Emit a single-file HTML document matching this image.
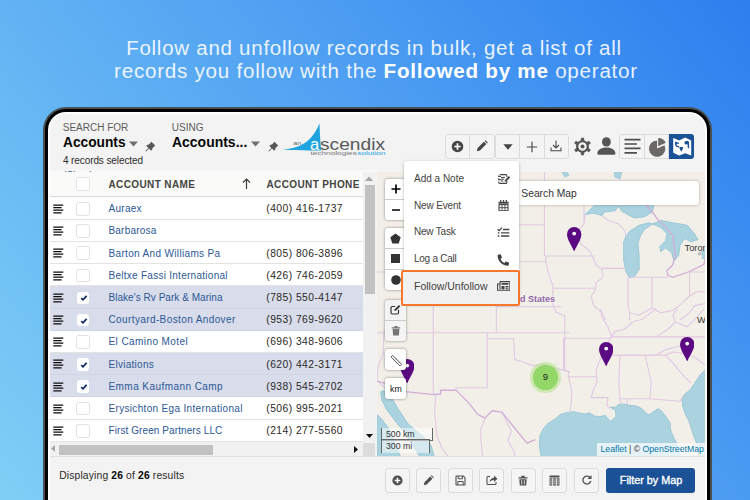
<!DOCTYPE html>
<html><head><meta charset="utf-8">
<style>
*{box-sizing:border-box;margin:0;padding:0}
html,body{width:750px;height:500px;overflow:hidden}
body{font-family:"Liberation Sans",sans-serif;position:relative;
background:linear-gradient(51deg,#7fcff6 0%,#2d7fef 100%);}
.abs{position:absolute}
.title{position:absolute;left:0;width:750px;text-align:center;color:rgba(255,255,255,.9);font-size:19.600px;white-space:nowrap;line-height:24px;letter-spacing:.7px;transform-origin:50% 50%}
.title b{color:#fff}
#t1{top:35.800px;left:-1.2px;transform:scaleX(1.047)}
#t2{top:59px;left:.7px;transform:scaleX(1.053)}
.frame{position:absolute;left:42.800px;top:106.600px;width:669.600px;height:420px;border-radius:23px;background:#4a5153}
.frame2{position:absolute;left:45.100px;top:108.900px;width:665px;height:420px;border-radius:20.700px;background:#000}
.screen{position:absolute;left:47.800px;top:111.800px;width:659.200px;height:400px;border-radius:18px 18px 0 0;overflow:hidden;background:#fff}
.inner{position:absolute;left:2.200px;top:2.200px;width:654.800px;height:400px;border-radius:15.800px 15.800px 0 0;overflow:hidden;background:#f3f3f3}
.pg{position:absolute;left:-50px;top:-114px;width:750px;height:500px}
.lbl{position:absolute;font-size:10px;letter-spacing:0;color:#5e5c5a;white-space:nowrap}
.big{position:absolute;font-size:15px;transform-origin:0 50%;transform:scaleX(.915);font-weight:bold;color:#080707;white-space:nowrap}
.sm{position:absolute;font-size:10px;letter-spacing:-.1px;color:#2e2c2a;white-space:nowrap}
.th{position:absolute;font-size:10px;font-weight:bold;letter-spacing:.38px;color:#454543;white-space:nowrap;top:178.800px;line-height:12px}
.row{position:absolute;left:48px;width:316px;height:22.2px;border-bottom:1px solid #e4e3e2;background:#fff}
.row.sel{background:#d8dceb;border-bottom-color:#d0d4e4}
.row .nm{position:absolute;left:60.5px;top:5.700px;letter-spacing:.3px;font-size:10px;line-height:12px;color:#2b5896;white-space:nowrap}
.row .ph{position:absolute;left:218.3px;top:5.700px;letter-spacing:.45px;font-size:10.300px;line-height:12px;color:#2b2826;white-space:nowrap}
.row .cb{position:absolute;left:28.400px;top:4.500px;width:13.500px;height:13.500px;border:1px solid #e3e1e0;border-radius:2.500px;background:#fff}
.row.sel .cb{border-color:#fff;left:29px;top:5.300px;width:12.300px;height:12.300px}
.row .li{position:absolute;left:5.300px;top:6.400px;width:11px;height:10px}
.tb{position:absolute;top:134px;height:25px;border:1px solid #dddbda;background:#f4f4f4}
.mctl{position:absolute;left:385.400px;width:21px;background:#fff;border-radius:3px;box-shadow:0 0 3px rgba(0,0,0,.45)}
.mi{position:absolute;left:414px;font-size:10.5px;color:#444341;white-space:nowrap;line-height:12px}
.bb{position:absolute;top:467.700px;width:25px;height:25px;border:1px solid #dddbda;border-radius:3px;background:#f5f5f5}
</style></head><body>
<div class="title" id="t1">Follow and unfollow records in bulk, get a list of all</div>
<div class="title" id="t2">records you follow with the <b>Followed by me</b> operator</div>
<div class="frame"></div><div class="frame2"></div>
<div class="screen"><div class="inner"><div class="pg" id="pg">

<div class="abs" style="left:48px;top:112px;width:659px;height:59px;background:#f3f3f3"></div>
<div class="abs" style="left:48px;top:169.300px;width:329px;height:2.700px;background:linear-gradient(#f3f3f3,#fbfbfa)"></div>
<div class="lbl" style="left:62.800px;top:122px">SEARCH FOR</div>
<div class="big" style="left:63px;top:133.2px">Accounts</div>
<svg class="abs" style="left:129.300px;top:141.500px" width="9" height="6" viewBox="0 0 9 6"><path d="M0 0.5h9L4.5 5.5z" fill="#706e6b"/></svg>
<svg class="abs pin" style="left:145.300px;top:140.800px" width="11" height="11" viewBox="0 0 11 11"><path d="M6.2 0.6l4.2 4.2-1.1.5-1.9 1.9-.3 2-1.2.3L4 7.6 1 10.6l-.6-.6 3-3L1.500 5.100l.3-1.200 2-.3L5.700 1.700z" fill="#5a5856"/></svg>
<div class="lbl" style="left:171.800px;top:122px">USING</div>
<div class="big" style="left:172px;top:133.2px;transform:scaleX(.931)">Accounts...</div>
<svg class="abs" style="left:250.800px;top:141.500px" width="9" height="6" viewBox="0 0 9 6"><path d="M0 0.5h9L4.5 5.5z" fill="#706e6b"/></svg>
<svg class="abs pin" style="left:267.800px;top:140.800px" width="11" height="11" viewBox="0 0 11 11"><path d="M6.2 0.6l4.2 4.2-1.1.5-1.9 1.9-.3 2-1.2.3L4 7.6 1 10.6l-.6-.6 3-3L1.500 5.100l.3-1.200 2-.3L5.700 1.700z" fill="#5a5856"/></svg>
<div class="sm" style="left:63px;top:155px">4 records selected</div>
<div class="sm" style="left:63px;top:169.600px;color:#2b5896">(Clear)</div>
<!-- logo -->
<svg class="abs" style="left:280px;top:120px" width="110" height="38" viewBox="0 0 110 38">
<path d="M2.400 29.600C10 29 18 27.200 24 23.500C31 19 36 12 39.500 3.200C39.800 12 40.300 22 41.200 30.400L30 30.400C20 30.400 10 30.200 2.400 29.600z" fill="#1ea4e0"/>
<text x="13.300" y="25.200" font-family="Liberation Sans" font-size="6" fill="#666" textLength="8" lengthAdjust="spacingAndGlyphs">an</text>
<text x="30" y="30.100" font-family="Liberation Sans" font-size="16" fill="#fff" textLength="9.200" lengthAdjust="spacingAndGlyphs">a</text>
<text x="40" y="30.100" font-family="Liberation Sans" font-size="16" fill="#58595b" textLength="65" lengthAdjust="spacingAndGlyphs">scendix</text>
<text x="30.400" y="35" font-family="Liberation Sans" font-size="5.200" fill="#77787b" textLength="46.500" lengthAdjust="spacingAndGlyphs">technologies</text>
<text x="77.300" y="35" font-family="Liberation Sans" font-size="5.200" fill="#1ea4e0" textLength="28.300" lengthAdjust="spacingAndGlyphs">solution</text>
</svg>
<!-- toolbar -->
<div class="tb" style="left:445px;width:25.500px;border-radius:3px 0 0 3px"></div>
<div class="tb" style="left:469.500px;width:25.500px;border-radius:0 3px 3px 0"></div>
<div class="tb" style="left:495.500px;width:25px;border-radius:3px 0 0 3px"></div>
<div class="tb" style="left:519.500px;width:25.500px;border-radius:0"></div>
<div class="tb" style="left:544px;width:25px;border-radius:0 3px 3px 0"></div>
<svg class="abs" style="left:451px;top:140px" width="13" height="13" viewBox="0 0 13 13"><circle cx="6.500" cy="6.500" r="5.800" fill="#444"/><path d="M6.500 3.300v6.400M3.300 6.500h6.400" stroke="#fff" stroke-width="1.700"/></svg>
<svg class="abs" style="left:476px;top:140.500px" width="12" height="12" viewBox="0 0 12 12"><path d="M0.800 11.200l.8-3.200 6.300-6.300 2.400 2.400-6.300 6.300zM8.600 1l.9-.7 2.300 2.300-.8.800z" fill="#444"/></svg>
<svg class="abs" style="left:503px;top:144px" width="10" height="6" viewBox="0 0 10 6"><path d="M0.300 0.300h9.400L5 5.700z" fill="#444"/></svg>
<svg class="abs" style="left:526px;top:141px" width="12" height="12" viewBox="0 0 12 12"><path d="M6 0.800v10.400M0.800 6h10.400" stroke="#4a4a4a" stroke-width="1.200"/></svg>
<svg class="abs" style="left:550.500px;top:140.500px" width="12" height="12" viewBox="0 0 12 12"><path d="M6 0.500v7M3 5l3 3 3-3" stroke="#4a4a4a" stroke-width="1.100" fill="none"/><path d="M1 7.500v3.300h10V7.500" stroke="#4a4a4a" stroke-width="1.100" fill="none"/></svg>
<!-- gear -->
<svg class="abs" style="left:573.5px;top:137.1px" width="19" height="19" viewBox="-9.5 -9.5 19 19"><circle r="5.9" fill="#575553"/><path d="M-1.25 -5.87 L-1.05 -8.33 L1.05 -8.33 L1.25 -5.87 L4.46 -4.01 L6.69 -5.08 L7.74 -3.26 L5.71 -1.85 L5.71 1.85 L7.74 3.26 L6.69 5.08 L4.46 4.01 L1.25 5.87 L1.05 8.33 L-1.05 8.33 L-1.25 5.87 L-4.46 4.01 L-6.69 5.08 L-7.74 3.26 L-5.71 1.85 L-5.71 -1.85 L-7.74 -3.26 L-6.69 -5.08 L-4.46 -4.01z" fill="#575553" stroke="#575553" stroke-width="1" stroke-linejoin="round"/><circle r="4.2" fill="#f3f3f3"/><circle r="2" fill="#575553"/></svg>
<!-- user -->
<svg class="abs" style="left:597px;top:137.5px" width="19" height="18.5" viewBox="0 0 19 18.5"><ellipse cx="9.4" cy="4.9" rx="4.4" ry="4.7" fill="#575553"/><path d="M0.400 16.200c0-3.200 3.600-5.700 9-5.700s9 2.500 9 5.700c0 1-.7 1.600-1.600 1.600H2c-.9 0-1.600-.6-1.600-1.600z" fill="#575553"/></svg>
<!-- view group -->
<div class="tb" style="left:619.500px;width:25.500px;border-radius:3px 0 0 3px"></div>
<div class="tb" style="left:644px;width:25.500px;border-radius:0"></div>
<div class="abs" style="left:669px;top:134px;width:25.500px;height:25.500px;background:#1b5297;border-radius:0 3px 3px 0"></div>
<svg class="abs" style="left:624px;top:138.500px" width="17" height="16" viewBox="0 0 17 16"><path d="M0.500 1.600h16M0.500 6h12.500M0.500 10.400h16M0.500 14.800h12.500" stroke="#514f4d" stroke-width="1.700"/></svg>
<svg class="abs" style="left:0;top:0" width="750" height="500" viewBox="0 0 750 500"><path d="M657.10 148.60 L664.53 145.13 A8.2 8.2 0 1 1 657.10 140.40z M658.20 146.30 L658.20 137.90 A8.4 8.4 0 0 1 665.81 142.75z" fill="#6b6966"/><path d="M673.2 137.900L679.200 140.400 685.200 137.600 691.200 140.400V155.600L685.200 153.200 679.200 155.600 673.200 152.800z" fill="#fff"/><path d="M675.200 141.600l3.600 1.200.4 1.400-2.200-.6-.4 1.600 2.400 1 .2 1.600-3.400-1.400-.9-2.400z" fill="#1b5297"/><path d="M684.600 141.600l2.600-.8 1.800 1 .2 6.600-1.500-.4-.1-3.800-2.200.4-1-1.400z" fill="#1b5297"/><path d="M679.200 147.400l2.200-.6 2 .8-1.900 4.200-1.300-1.900z" fill="#1b5297"/></svg>


<div class="abs" style="left:48px;top:172px;width:329px;height:284px;background:#fff"></div>
<div class="abs" style="left:48px;top:172px;width:316px;height:25.300px;background:#fafaf9;border-bottom:1px solid #dddbda"></div>
<div class="abs" style="left:76.400px;top:177.400px;width:13.500px;height:13.500px;border:1px solid #e3e1e0;border-radius:2.500px;background:#fff"></div>
<div class="th" style="left:108.500px">ACCOUNT NAME</div>
<svg class="abs" style="left:242px;top:178.500px" width="9" height="11" viewBox="0 0 9 11"><path d="M4.500 1v10M1 4.500l3.500-3.500 3.500 3.500" stroke="#3e3e3c" stroke-width="1.200" fill="none"/></svg>
<div class="th" style="left:266.500px">ACCOUNT PHONE</div>
<div class="row" style="top:197.6px"><svg class="li" viewBox="0 0 11 10"><path d="M0.300 1h10M0.300 3.600h8.300M0.300 6.200h10M0.300 8.800h8.300" stroke="#0c0d0e" stroke-width="1.250"/></svg><div class="cb"></div><div class="nm" style="letter-spacing:0.28px">Auraex</div><div class="ph">(400) 416-1737</div></div>
<div class="row" style="top:219.8px"><svg class="li" viewBox="0 0 11 10"><path d="M0.300 1h10M0.300 3.600h8.300M0.300 6.200h10M0.300 8.800h8.300" stroke="#0c0d0e" stroke-width="1.250"/></svg><div class="cb"></div><div class="nm" style="letter-spacing:0.20px">Barbarosa</div><div class="ph"></div></div>
<div class="row" style="top:242.0px"><svg class="li" viewBox="0 0 11 10"><path d="M0.300 1h10M0.300 3.600h8.300M0.300 6.200h10M0.300 8.800h8.300" stroke="#0c0d0e" stroke-width="1.250"/></svg><div class="cb"></div><div class="nm" style="letter-spacing:0.34px">Barton And Williams Pa</div><div class="ph">(805) 806-3896</div></div>
<div class="row" style="top:264.2px"><svg class="li" viewBox="0 0 11 10"><path d="M0.300 1h10M0.300 3.600h8.300M0.300 6.200h10M0.300 8.800h8.300" stroke="#0c0d0e" stroke-width="1.250"/></svg><div class="cb"></div><div class="nm" style="letter-spacing:0.27px">Beltxe Fassi International</div><div class="ph">(426) 746-2059</div></div>
<div class="row sel" style="top:286.4px"><svg class="li" viewBox="0 0 11 10"><path d="M0.300 1h10M0.300 3.600h8.300M0.300 6.200h10M0.300 8.800h8.300" stroke="#0c0d0e" stroke-width="1.250"/></svg><div class="cb"><svg style="position:absolute;left:1.600px;top:1.800px" width="8" height="8" viewBox="0 0 8 8"><path d="M1.200 4.200l1.800 1.700L6.600 1.900" stroke="#0f2a63" stroke-width="1.700" fill="none"/></svg></div><div class="nm" style="letter-spacing:0.04px">Blake's Rv Park &amp; Marina</div><div class="ph">(785) 550-4147</div></div>
<div class="row sel" style="top:308.6px"><svg class="li" viewBox="0 0 11 10"><path d="M0.300 1h10M0.300 3.600h8.300M0.300 6.200h10M0.300 8.800h8.300" stroke="#0c0d0e" stroke-width="1.250"/></svg><div class="cb"><svg style="position:absolute;left:1.600px;top:1.800px" width="8" height="8" viewBox="0 0 8 8"><path d="M1.200 4.200l1.800 1.700L6.600 1.900" stroke="#0f2a63" stroke-width="1.700" fill="none"/></svg></div><div class="nm" style="letter-spacing:0.39px">Courtyard-Boston Andover</div><div class="ph">(953) 769-9620</div></div>
<div class="row" style="top:330.8px"><svg class="li" viewBox="0 0 11 10"><path d="M0.300 1h10M0.300 3.600h8.300M0.300 6.200h10M0.300 8.800h8.300" stroke="#0c0d0e" stroke-width="1.250"/></svg><div class="cb"></div><div class="nm" style="letter-spacing:0.42px">El Camino Motel</div><div class="ph">(696) 348-9606</div></div>
<div class="row sel" style="top:353.0px"><svg class="li" viewBox="0 0 11 10"><path d="M0.300 1h10M0.300 3.600h8.300M0.300 6.200h10M0.300 8.800h8.300" stroke="#0c0d0e" stroke-width="1.250"/></svg><div class="cb"><svg style="position:absolute;left:1.600px;top:1.800px" width="8" height="8" viewBox="0 0 8 8"><path d="M1.200 4.200l1.800 1.700L6.600 1.900" stroke="#0f2a63" stroke-width="1.700" fill="none"/></svg></div><div class="nm" style="letter-spacing:0.28px">Elviations</div><div class="ph">(620) 442-3171</div></div>
<div class="row sel" style="top:375.2px"><svg class="li" viewBox="0 0 11 10"><path d="M0.300 1h10M0.300 3.600h8.300M0.300 6.200h10M0.300 8.800h8.300" stroke="#0c0d0e" stroke-width="1.250"/></svg><div class="cb"><svg style="position:absolute;left:1.600px;top:1.800px" width="8" height="8" viewBox="0 0 8 8"><path d="M1.200 4.200l1.800 1.700L6.600 1.900" stroke="#0f2a63" stroke-width="1.700" fill="none"/></svg></div><div class="nm" style="letter-spacing:0.44px">Emma Kaufmann Camp</div><div class="ph">(938) 545-2702</div></div>
<div class="row" style="top:397.4px"><svg class="li" viewBox="0 0 11 10"><path d="M0.300 1h10M0.300 3.600h8.300M0.300 6.200h10M0.300 8.800h8.300" stroke="#0c0d0e" stroke-width="1.250"/></svg><div class="cb"></div><div class="nm" style="letter-spacing:0.33px">Erysichton Ega International</div><div class="ph">(506) 995-2021</div></div>
<div class="row" style="top:419.6px"><svg class="li" viewBox="0 0 11 10"><path d="M0.300 1h10M0.300 3.600h8.300M0.300 6.200h10M0.300 8.800h8.300" stroke="#0c0d0e" stroke-width="1.250"/></svg><div class="cb"></div><div class="nm" style="letter-spacing:0.09px">First Green Partners LLC</div><div class="ph">(214) 277-5560</div></div>

<div class="abs" style="left:363.500px;top:172px;width:12px;height:270px;background:#f1f1f1"></div>
<div class="abs" style="left:364.600px;top:185.500px;width:10px;height:108.500px;background:#c1c1c1"></div>
<svg class="abs" style="left:365.500px;top:176px" width="8" height="5" viewBox="0 0 8 5"><path d="M0 5L4 0.500 8 5z" fill="#a3a3a3"/></svg>
<svg class="abs" style="left:366.200px;top:433.600px" width="7" height="4" viewBox="0 0 7 4"><path d="M0 0L3.500 4 7 0z" fill="#111"/></svg>
<div class="abs" style="left:48px;top:441.600px;width:327.500px;height:14.300px;background:#f1f1f1"></div>
<div class="abs" style="left:59.500px;top:444.600px;width:154px;height:10px;background:#c1c1c1"></div>
<svg class="abs" style="left:51.500px;top:445.500px" width="4" height="7" viewBox="0 0 4 7"><path d="M4 0L0 3.500 4 7z" fill="#a3a3a3"/></svg>
<svg class="abs" style="left:354.300px;top:446px" width="4" height="7" viewBox="0 0 4 7"><path d="M0 0L4 3.500 0 7z" fill="#111"/></svg><div class="abs" style="left:363.500px;top:443.400px;width:12px;height:12.500px;background:#dcdcdc"></div>
<div class="abs" style="left:375.500px;top:171px;width:1.700px;height:285px;background:#f3f3f3"></div>

<svg class="abs" style="left:377px;top:171px" width="330" height="285" viewBox="377 171 330 285">
<rect x="377" y="171" width="330" height="285" fill="#f2efe9"/>
<path d="M585.2 214.4 L592.4 207.2 L598.4 200.0 L656.0 200.0 L653.6 206.0 L652.4 212.0 L644.0 216.8 L634.4 218.0 L627.2 214.4 L621.2 210.8 L618.8 206.0 L615.2 210.8 L604.4 212.0 L602.0 215.6 L593.6 213.2z M623.6 242.0 L626.0 236.0 L629.6 231.2 L639.2 225.2 L648.8 222.8 L652.4 224.0 L644.0 230.0 L640.4 236.0 L638.0 243.2 L639.2 255.2 L639.2 269.6 L634.4 276.8 L629.6 278.0 L626.0 272.0 L623.6 260.0z M652.4 224.0 L660.8 220.4 L672.8 222.8 L687.2 225.2 L694.4 233.6 L698.0 239.6 L690.8 242.0 L684.8 238.4 L680.0 245.6 L678.8 255.2 L674.0 261.2 L671.6 252.8 L665.6 248.0 L660.8 251.6 L659.6 246.8 L665.6 240.8 L666.8 233.6 L660.8 227.6z M701.6 251.6 L707.6 248.7 L707.6 257.6 L702.8 258.8z M562 172l4-1 3 4-4 2zM614 171h8l-2 8-5-2z M541.3 458.0 L539.3 446.0 L540.0 435.3 L543.3 428.7 L548.0 423.3 L554.7 419.3 L560.0 414.7 L565.3 412.9 L573.3 411.6 L578.7 412.9 L585.3 414.0 L589.3 412.7 L594.7 416.0 L600.0 416.7 L605.3 415.3 L608.0 419.0 L610.7 421.3 L616.0 416.7 L615.3 410.0 L610.0 407.3 L615.3 407.3 L618.0 404.7 L623.3 404.0 L630.0 405.3 L636.7 406.0 L642.0 408.7 L646.0 413.3 L649.3 414.7 L654.0 411.3 L658.0 408.7 L661.3 410.7 L666.0 416.7 L670.0 422.7 L670.7 430.0 L673.3 436.7 L676.7 443.3 L679.3 448.7 L680.7 458.0z M709.0 366.0 L700.0 375.0 L690.0 390.0 L684.7 394.0 L682.0 399.3 L682.7 406.0 L684.7 412.7 L688.7 420.7 L691.3 428.7 L694.0 436.7 L696.7 443.3 L698.7 458.0 L709.0 458.0z M380.6 391.6 L386.6 390.4 L391.4 397.6 L398.6 409.6 L408.2 424.0 L422.6 436.0 L431.0 445.6 L434.6 457.6 L420.2 457.6 L413.0 445.6 L403.4 431.2 L393.8 419.2 L386.6 409.6 L381.8 400.0z M377.0 414.4 L381.8 419.2 L389.0 428.8 L393.8 440.8 L401.0 457.6 L377.0 457.6z" fill="#aad3df" stroke="#93c3d3" stroke-width=".8"/>
<path d="M585.2 214.4 L584.0 224.0 L578.0 231.2 L580.4 243.2 L590.0 251.6 L592.4 256.4 L596.0 264.8 L602.0 269.6 L603.2 276.8 L596.0 282.8 L594.8 291.2 L591.2 296.0 L593.6 305.6 L602.0 312.8 L605.6 320.0 M602.0 268.4 L624.8 268.4 M627.9 278.0 L627.9 305.6 L629.6 312.8 L629.6 320.0 M651.9 277.3 L651.9 308.0 M627.9 277.3 L668.0 277.3 M689.6 272.0 L689.6 296.0 L682.4 303.2 L672.8 310.4 L660.8 312.8 L651.9 308.0 L639.2 315.2 L629.6 312.8 M689.6 272.0 L707.6 272.0 M602.0 215.6 L608.0 220.4 L618.8 224.0 L624.8 231.2 L626.0 236.0 M584.0 224.0 L584.0 197.6 M689.6 296.0 L698.0 291.2 L707.6 292.4 M707.6 303.2 L694.4 305.6 L689.6 312.8 L680.0 320.0 M563.6 338.3 L610.4 338.3 L611.6 336.9 L708.8 336.9 M610.4 355.1 L665.6 355.1 M600.8 308.8 L602.0 317.2 L608.0 326.8 L611.6 336.9 L608.0 343.6 L600.8 358.0 L596.0 370.0 L597.2 382.0 L593.6 389.2 L591.2 397.6 L608.0 397.6 L606.8 404.8 L609.2 408.4 M620.0 355.6 L618.8 382.0 L620.0 398.8 L621.2 404.8 M645.2 355.6 L651.2 382.0 L650.0 398.8 L680.0 401.2 L682.4 396.4 M620.0 398.8 L627.2 398.8 L627.2 404.1 M627.2 398.8 L650.0 398.8 M656.0 355.1 L665.6 349.6 L680.0 346.0 L694.4 346.0 M665.6 355.1 L672.8 362.8 L684.8 377.2 L690.8 383.2 M665.6 355.1 L672.8 352.0 L682.4 353.2 L694.4 356.8 L705.2 365.2 M568.4 376.7 L596.0 376.7 M563.6 338.3 L563.6 370.0 L568.4 371.2 L568.4 376.7 L572.0 391.6 L570.8 406.0 L569.6 412.7 M611.6 336.9 L615.2 331.6 L624.8 329.2 L632.0 322.0 L641.6 319.6 L651.2 312.4 L656.0 308.8 M656.0 336.9 L668.0 329.2 L675.2 322.0 L672.8 314.8 L677.6 308.8 M675.2 322.0 L687.2 326.8 L696.8 317.2 L704.0 308.8 M376.8 332.7 L570.0 332.7 M433.2 171.2 L433.2 394.4 M496.3 224.0 L496.3 332.7 M487.2 332.7 L487.2 387.7 L456.0 387.7 L456.0 390.1 L440.4 390.1 L440.4 394.4 L433.2 394.4 M487.2 338.7 L513.6 338.7 L514.8 359.6 L523.2 362.0 L532.8 365.6 L544.8 364.4 L554.4 368.0 L564.0 370.4 L570.0 371.6 M564.7 332.7 L564.7 370.9 M553.0 305.0 L556.0 312.0 L564.7 316.0 L564.7 332.7 M376.8 272.0 L496.3 272.0 M496.3 261.7 L545.8 261.7 L545.8 256.0 L595.0 256.0 M544.4 171.0 L544.4 256.0 M496.0 224.7 L544.4 224.7 M545.8 261.7 L549.0 275.0 L552.8 285.5 L553.0 305.0 M552.8 288.3 L594.8 288.3 M496.3 306.8 L561.6 306.8 M435.8 395.2 L434.6 412.0 L437.0 436.0 L441.8 448.0 L449.0 457.6 M485.0 418.0 L480.2 431.2 L482.6 457.6 M501.8 412.0 L511.4 431.2 L507.8 440.8 L513.8 450.4 L515.0 457.6 M377.0 380.8 L386.6 389.2 M384.2 330.4 L383.0 354.4 L378.2 366.4 L377.0 380.8" fill="none" stroke="#e0c9e2" stroke-width="1.1"/>
<path d="M641.6 200.0 L652.4 212.0 L658.4 220.4 L665.6 226.4 L672.8 236.0 L675.2 255.2 L672.8 264.8 L666.8 270.8 L668.0 275.6 L672.8 277.3 L689.6 271.5 L704.0 264.3 L705.2 257.6 L707.6 255.2 M377.0 380.8 L384.2 383.2 L405.8 391.6 L433.4 394.7 L440.6 394.0 L440.6 390.4 L456.2 390.4 L468.2 402.4 L477.8 414.4 L485.0 418.0 L492.2 410.8 L501.8 412.0 L511.4 424.0 L521.0 436.0 L527.0 443.2 L535.4 439.6" fill="none" stroke="#d2add7" stroke-width="1.300"/>
<text x="520" y="301.600" font-family="Liberation Sans" font-size="9" font-weight="bold" fill="#8e66a3" stroke="#f7f4f0" stroke-width="1.5" paint-order="stroke">d States</text>
<text x="684.500" y="250.500" font-family="Liberation Sans" font-size="9.300" fill="#333">Toronto</text>
<circle cx="699.500" cy="253.800" r="1.200" fill="none" stroke="#777" stroke-width=".6"/>
<text x="697" y="322.500" font-family="Liberation Sans" font-size="9.300" fill="#333">Washington</text>
</svg>
<svg class="abs" style="left:567.2px;top:227.0px" width="14.400" height="24" viewBox="0 0 14.400 24"><path d="M6.500 23.200C5.600 20 0 12.700 0 7.200A7.200 7.200 0 0 1 14.400 7.200C14.400 12.700 8.800 20 7.900 23.200Q7.200 24.800 6.500 23.200z" fill="#5c0a82"/><circle cx="7.200" cy="6.600" r="1.900" fill="#fff"/></svg>
<svg class="abs" style="left:599.1px;top:342.3px" width="14.400" height="24" viewBox="0 0 14.400 24"><path d="M6.500 23.200C5.600 20 0 12.700 0 7.200A7.200 7.200 0 0 1 14.400 7.200C14.400 12.700 8.800 20 7.900 23.200Q7.200 24.800 6.500 23.200z" fill="#5c0a82"/><circle cx="7.200" cy="6.600" r="1.900" fill="#fff"/></svg>
<svg class="abs" style="left:679.8px;top:337.5px" width="14.400" height="24" viewBox="0 0 14.400 24"><path d="M6.500 23.200C5.600 20 0 12.700 0 7.200A7.200 7.200 0 0 1 14.400 7.200C14.400 12.700 8.800 20 7.900 23.200Q7.200 24.800 6.500 23.200z" fill="#5c0a82"/><circle cx="7.200" cy="6.600" r="1.900" fill="#fff"/></svg>
<svg class="abs" style="left:400.1px;top:359.0px" width="14.400" height="24" viewBox="0 0 14.400 24"><path d="M6.500 23.200C5.600 20 0 12.700 0 7.200A7.200 7.200 0 0 1 14.400 7.200C14.400 12.700 8.800 20 7.900 23.200Q7.200 24.800 6.500 23.200z" fill="#5c0a82"/><circle cx="7.200" cy="6.600" r="1.900" fill="#fff"/></svg>
<div class="abs" style="left:529.800px;top:362px;width:31px;height:31px;border-radius:50%;background:rgba(181,226,140,.6)"></div>
<div class="abs" style="left:533px;top:365.200px;width:24.600px;height:24.600px;border-radius:50%;background:rgba(110,204,57,.6);font-size:9.500px;line-height:24.600px;text-align:center;color:#222">9</div>
<div class="abs" style="left:377px;top:170px;width:331px;height:2px;background:#f3f3f3"></div>
<!-- search -->
<div class="abs" style="left:515px;top:181px;width:184px;height:24px;background:#fff;border-radius:3px;box-shadow:0 0 3px rgba(0,0,0,.3)"></div>
<div class="abs" style="left:521.300px;top:187.600px;font-size:10.300px;line-height:12px;color:#333">Search Map</div>
<!-- controls -->
<div class="mctl" style="top:179px;height:41.500px"><div style="position:absolute;left:0;top:20.500px;width:21px;height:1px;background:#ccc"></div>
<svg style="position:absolute;left:5.500px;top:5px" width="10" height="10" viewBox="0 0 10 10"><path d="M5 0.500v9M0.500 5h9" stroke="#000" stroke-width="1.700"/></svg>
<svg style="position:absolute;left:5.500px;top:26px" width="10" height="10" viewBox="0 0 10 10"><path d="M1 5h8" stroke="#000" stroke-width="1.700"/></svg></div>
<div class="mctl" style="top:228px;height:62.500px"><div style="position:absolute;left:0;top:20.500px;width:21px;height:1px;background:#ccc"></div><div style="position:absolute;left:0;top:41.500px;width:21px;height:1px;background:#ccc"></div>
<svg style="position:absolute;left:5px;top:5px" width="11" height="11" viewBox="0 0 11 11"><path d="M5.500 0.500L10.700 4.300 8.700 10.500H2.300L0.300 4.300z" fill="#333"/></svg>
<svg style="position:absolute;left:6px;top:26.500px" width="9" height="9" viewBox="0 0 9 9"><rect width="9" height="9" fill="#333"/></svg>
<svg style="position:absolute;left:5.500px;top:47px" width="10" height="10" viewBox="0 0 10 10"><circle cx="5" cy="5" r="4.800" fill="#333"/></svg></div>
<div class="mctl" style="top:300px;height:41px;background:#f4f4f4"><div style="position:absolute;left:0;top:20.500px;width:21px;height:1px;background:#ccc"></div>
<svg style="position:absolute;left:5px;top:4.500px" width="11" height="11" viewBox="0 0 11 11"><path d="M8.500 5.800v3a1.200 1.200 0 0 1-1.200 1.200H2.200A1.200 1.200 0 0 1 1 8.800V3.700a1.200 1.200 0 0 1 1.200-1.200h3" stroke="#333" stroke-width="1.200" fill="none"/><path d="M4.300 7l.4-1.800L9 0.900l1.400 1.400-4.300 4.300z" fill="#333"/></svg>
<svg style="position:absolute;left:5.500px;top:25px" width="10" height="11" viewBox="0 0 10 11"><path d="M0.800 2.300h8.400v1.200H0.800zM3.500 1h3v1.300h-3zM1.600 4h6.800l-.5 6.500H2.100z" fill="#777"/></svg></div>
<div class="mctl" style="top:349.500px;height:20.500px"><svg style="position:absolute;left:4.500px;top:4.500px" width="13" height="13" viewBox="0 0 13 13"><path d="M2.700 1.400L11.600 10.300 10 11.900 1.100 3z" fill="#fff" stroke="#444" stroke-width=".9"/><path d="M3.800 4.200l.9-.9M5.300 5.700l.9-.9M6.800 7.200l.9-.9M8.300 8.700l.9-.9" stroke="#666" stroke-width=".5"/></svg></div>
<div class="mctl" style="top:378.500px;height:20.500px;font-size:8.800px;line-height:22.500px;text-align:center;color:#111">km</div>
<!-- scale -->
<div class="abs" style="left:381.500px;top:428.400px;width:52px;height:12.600px;border:1.600px solid #666;border-top:none;background:rgba(255,255,255,.5);font-size:8.700px;line-height:12px;padding-left:3.500px;color:#333;white-space:nowrap">500 km</div>
<div class="abs" style="left:381.500px;top:439.400px;width:49px;height:13.200px;border:1.600px solid #666;border-bottom:none;background:rgba(255,255,255,.5);font-size:8.700px;line-height:12.500px;padding-left:3.500px;color:#333;white-space:nowrap">300 mi</div>
<!-- attribution -->
<div class="abs" style="left:597px;top:443.500px;width:110px;height:12.500px;background:rgba(255,255,255,.7);font-size:8.700px;line-height:12.500px;padding-left:3.500px;color:#333;white-space:nowrap"><span style="color:#0078a8">Leaflet</span> | &copy; <span style="color:#0078a8">OpenStreetMap</span></div>
<!-- dropdown -->
<div class="abs" style="left:404.500px;top:161.500px;width:115px;height:143px;background:#fff;border-radius:3px;box-shadow:0 1px 3px rgba(0,0,0,.3)"></div>
<div class="abs" style="left:401.500px;top:270.300px;width:118.300px;height:36px;border:2.300px solid #f6772e;border-radius:2px;background:#f1f1f1"></div>
<div class="mi" style="top:172.700px;font-size:10px">Add a Note</div>
<div class="mi" style="top:199.700px;font-size:10px;letter-spacing:-.15px">New Event</div>
<div class="mi" style="top:226.100px;font-size:10px;letter-spacing:-.2px">New Task</div>
<div class="mi" style="top:253.400px;font-size:10px;letter-spacing:-.26px">Log a Call</div>
<div class="mi" style="top:280px">Follow/Unfollow</div>
<!-- menu icons -->
<svg class="abs" style="left:498px;top:174.100px" width="12.500" height="10" viewBox="0 0 12.500 10"><path d="M1.800 0.600h6a1 1 0 0 1 1 1v1.500M8.800 7v1.400a1 1 0 0 1-1 1h-6a1 1 0 0 1-1-1v-0.800M0.800 5.800v-1.600M0.800 2.400v-.8" stroke="#444" stroke-width="1.100" fill="none"/><path d="M0 2.400h3M0 5.800h3M3 3.400h4M3 5.200h3.200M3 7h2.200" stroke="#444" stroke-width="1"/><path d="M6.500 7.800l.5-1.900 3.800-3.800 1.400 1.400-3.800 3.800z" fill="#444"/></svg>
<svg class="abs" style="left:498.500px;top:200px" width="11" height="11.500" viewBox="0 0 11 11.500"><path d="M0.500 1.800h10v2H0.500z" fill="#444"/><path d="M2.700 0v2M5.500 0v2M8.300 0v2" stroke="#444" stroke-width="1.200"/><rect x="1" y="4.600" width="9" height="6.200" fill="none" stroke="#444" stroke-width="1.100"/><path d="M1 7.700h9M4 4.600v6.200M7 4.600v6.200" stroke="#444" stroke-width=".9"/></svg>
<svg class="abs" style="left:497.500px;top:227.500px" width="12.500" height="10" viewBox="0 0 12.500 10"><path d="M0.500 2.200l1.600 1.500L5 0.600" stroke="#444" stroke-width="1.200" fill="none"/><path d="M6 2.500h6.300M4 5.800h8.300M4 9h8.300M0.800 5.800h1.600M0.800 9h1.600" stroke="#444" stroke-width="1.300"/></svg>
<svg class="abs" style="left:497.500px;top:254.100px" width="12.500" height="12" viewBox="0 0 12.500 12"><path d="M1.200 0.800l1.900-.5c.4 0 .6.100.8.500l1 2.300c.1.400 0 .7-.3.900l-1.100.9c.8 1.800 2.200 3.200 4 4l.9-1.100c.2-.3.500-.4.900-.3l2.300 1c.4.200.5.400.5.800l-.5 1.900c-.1.400-.4.500-.8.500C5.100 11.700.8 7.400.5 1.600c0-.4.300-.7.700-.8z" fill="#444"/></svg>
<svg class="abs" style="left:497px;top:280.800px" width="13.500" height="10.500" viewBox="0 0 13.500 10.500"><path d="M3 0.600h9.900v9.300H1.800a1.200 1.200 0 0 1-1.200-1.200V3h2.400" fill="none" stroke="#444" stroke-width="1.100"/><path d="M3 0.600v8.200" stroke="#444" stroke-width="1.100"/><path d="M4.500 2h7v1.800h-7zM4.500 5h3v3.500h-3zM8.500 5h3v1.400h-3zM8.500 7.200h3v1.300h-3z" fill="#444"/></svg>


<div class="abs" style="left:48px;top:455.800px;width:659px;height:50px;background:#f3f3f3;border-top:1.200px solid #e0dfde"></div>
<div class="abs" style="left:59.200px;top:470.400px;font-size:10.300px;letter-spacing:.16px;line-height:12px;color:#2b2826;white-space:nowrap">Displaying <b style="color:#080707">26</b> of <b style="color:#080707">26</b> results</div>
<div class="bb" style="left:385px"></div><div class="bb" style="left:416.500px"></div><div class="bb" style="left:448px"></div><div class="bb" style="left:479.500px"></div><div class="bb" style="left:511px"></div><div class="bb" style="left:542.500px"></div><div class="bb" style="left:574px"></div>
<div class="abs" style="left:606.500px;top:468px;width:89px;height:25px;background:#1b5297;border-radius:3px;color:#fff;font-size:10.800px;line-height:25px;text-align:center;white-space:nowrap;-webkit-text-stroke:.35px #fff">Filter by Map</div>
<svg class="abs" style="left:392px;top:475px" width="11" height="11" viewBox="0 0 13 13"><circle cx="6.500" cy="6.500" r="6" fill="#505050"/><path d="M6.500 3.200v6.600M3.200 6.500h6.600" stroke="#fff" stroke-width="1.800"/></svg>
<svg class="abs" style="left:423.500px;top:475px" width="11" height="11" viewBox="0 0 12 12"><path d="M0.800 11.200l.8-3.200 6.300-6.300 2.400 2.400-6.300 6.300zM8.600 1l.9-.7 2.300 2.300-.8.800z" fill="#505050"/></svg>
<svg class="abs" style="left:455px;top:475px" width="11" height="11" viewBox="0 0 11 11"><path d="M1 1.500a.5.500 0 0 1 .5-.5h6.800L10 2.700v6.800a.5.500 0 0 1-.5.500h-8a.5.500 0 0 1-.5-.5z" fill="none" stroke="#505050" stroke-width="1.100"/><path d="M3.200 1v2.800h4.200V1M2.800 10V6.500h5.400V10" fill="none" stroke="#505050" stroke-width="1"/></svg>
<svg class="abs" style="left:486px;top:474.500px" width="12" height="12" viewBox="0 0 12 12"><path d="M4 2.500H1.800a.8.800 0 0 0-.8.800v6.400a.8.800 0 0 0 .8.800h7.400a.8.800 0 0 0 .8-.8V8" fill="none" stroke="#505050" stroke-width="1.100"/><path d="M3.500 8.500c.3-3 2-4.500 4.500-4.700V1.500l3.500 3.300L8 8V6c-2 0-3.300.7-4.500 2.500z" fill="#505050"/></svg>
<svg class="abs" style="left:518.500px;top:475px" width="10" height="11" viewBox="0 0 10 11"><path d="M0.500 2.200h9v1.300H0.500zM3.300 0.800h3.400v1.400H3.300zM1.300 4.200h7.400l-.5 6.300H1.800z" fill="#505050"/><path d="M3.700 5.200v4.300M6.300 5.200v4.300" stroke="#f5f5f5" stroke-width=".8"/></svg>
<svg class="abs" style="left:549.500px;top:475px" width="11" height="11" viewBox="0 0 11 11"><path d="M0.500 0.500h10v2H0.500z" fill="#505050"/><path d="M0.500 3.200h2.800v7.300H0.500zM4.100 3.200h2.800v7.300H4.100zM7.700 3.200h2.800v7.300H7.700z" fill="#505050"/><path d="M0.500 5h10M0.500 6.900h10M0.500 8.800h10" stroke="#f7f7f7" stroke-width=".7"/></svg>
<svg class="abs" style="left:581px;top:474.500px" width="12" height="12" viewBox="0 0 12 12"><path d="M9.800 7a4 4 0 1 1-1-3.700" fill="none" stroke="#505050" stroke-width="1.300"/><path d="M10.500 1v4h-4z" fill="#505050"/></svg>

</div></div></div>
</body></html>
